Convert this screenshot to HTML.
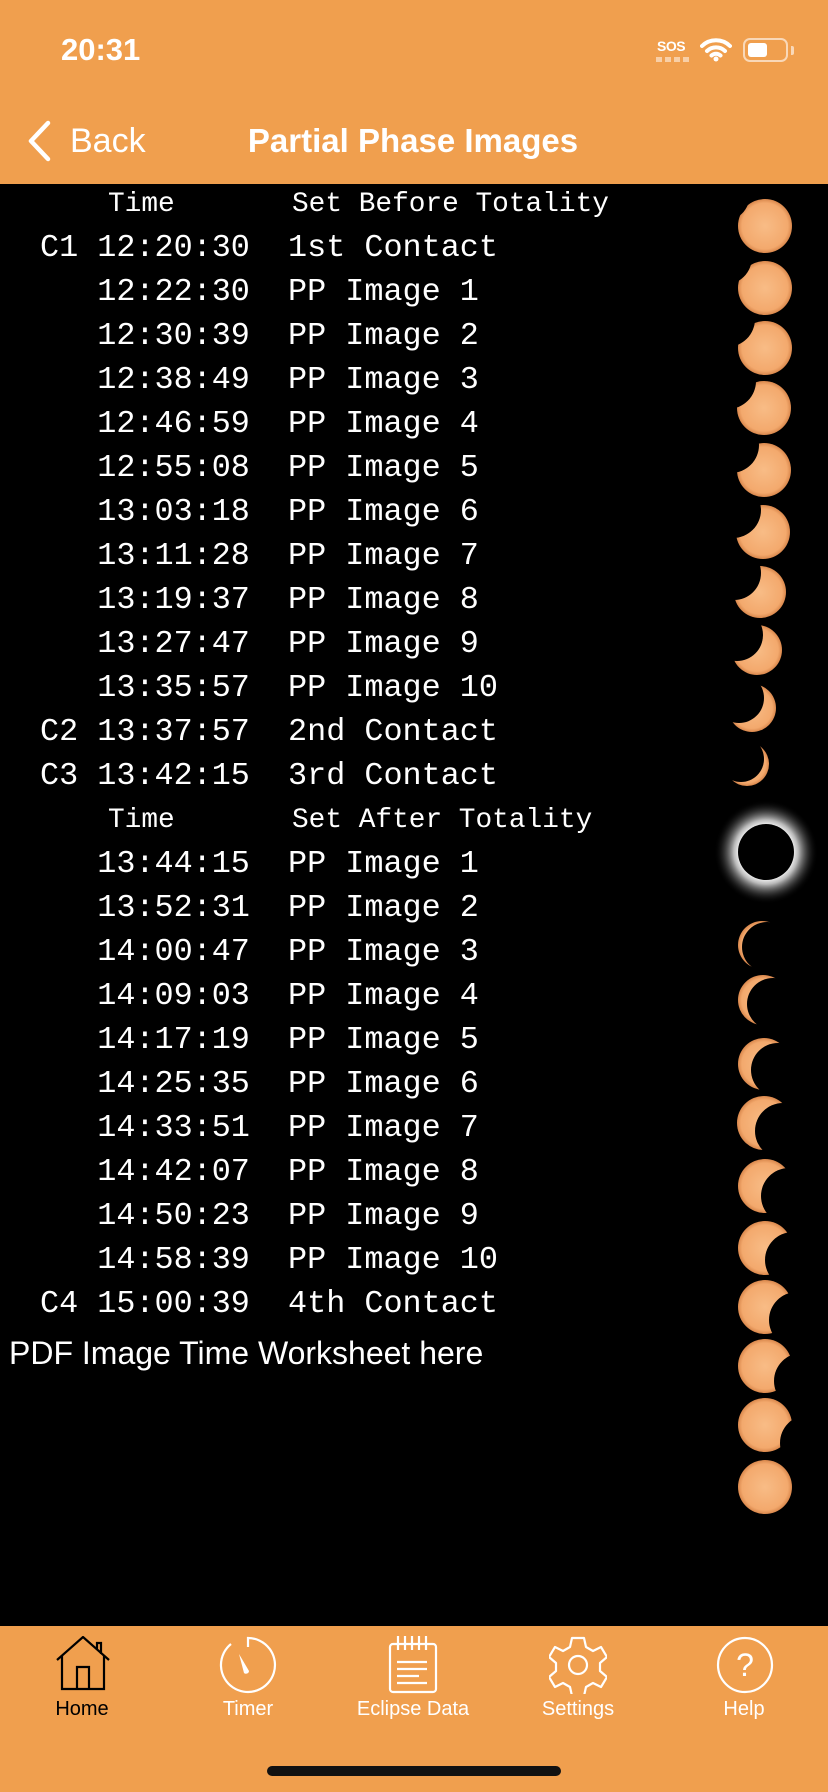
<!DOCTYPE html>
<html><head><meta charset="utf-8"><style>
*{margin:0;padding:0;box-sizing:border-box}
html,body{width:828px;height:1792px;overflow:hidden}
body{background:#000;position:relative;font-family:"Liberation Sans",sans-serif}
.top{position:absolute;left:0;top:0;width:828px;height:184px;background:#F09F4E}
.tab{position:absolute;left:0;top:1626px;width:828px;height:166px;background:#F09F4E}
.m{position:absolute;font-family:"Liberation Mono",monospace;color:#fff;white-space:pre;line-height:1}
.r{font-size:31.8px}
.h{font-size:27.8px}
.lbl{position:absolute;top:72px;font-size:20px;color:#fff;transform:translateX(-50%);white-space:nowrap}
</style></head><body>
<div class="top">
<div style="position:absolute;left:61px;top:32px;font-size:31px;font-weight:bold;color:#fff">20:31</div>
<div style="position:absolute;left:657px;top:38px;font-size:14px;font-weight:bold;color:#fff;letter-spacing:-0.5px">SOS</div>
<div style="position:absolute;left:656px;top:57px;width:33px;height:5px;background:repeating-linear-gradient(90deg,rgba(255,255,255,.5) 0 6px,transparent 6px 9px)"></div>
<svg style="position:absolute;left:700px;top:37px" width="32" height="25" viewBox="0 0 32 25"><path d="M2 9a20 20 0 0 1 28 0M7 14a13 13 0 0 1 18 0M11.5 18.5a6.5 6.5 0 0 1 9 0" stroke="#fff" stroke-width="4" fill="none" stroke-linecap="round"/><circle cx="16" cy="22" r="2.5" fill="#fff"/></svg>
<div style="position:absolute;left:743px;top:38px;width:45px;height:24px;border:2px solid rgba(255,255,255,.6);border-radius:7px"><div style="position:absolute;left:3px;top:3px;width:19px;height:14px;background:#fff;border-radius:3px"></div></div>
<div style="position:absolute;left:791px;top:46px;width:3px;height:9px;background:rgba(255,255,255,.6);border-radius:0 2px 2px 0"></div>
<svg style="position:absolute;left:25px;top:120px" width="28" height="42" viewBox="0 0 28 42"><path d="M23 3L6 21l17 18" stroke="#fff" stroke-width="4.5" fill="none" stroke-linecap="round" stroke-linejoin="round"/></svg>
<div style="position:absolute;left:70px;top:122px;font-size:34px;color:#fff">Back</div>
<div style="position:absolute;left:413px;top:122px;font-size:33px;font-weight:bold;color:#fff;transform:translateX(-50%);white-space:nowrap">Partial Phase Images</div>
</div>

<div class="m h" style="left:108px;top:191px">Time</div>
<div class="m h" style="left:292px;top:191px">Set Before Totality</div>
<div class="m r" style="left:40px;top:233px">C1 12:20:30  1st Contact</div>
<div class="m r" style="left:40px;top:277px">   12:22:30  PP Image 1</div>
<div class="m r" style="left:40px;top:321px">   12:30:39  PP Image 2</div>
<div class="m r" style="left:40px;top:365px">   12:38:49  PP Image 3</div>
<div class="m r" style="left:40px;top:409px">   12:46:59  PP Image 4</div>
<div class="m r" style="left:40px;top:453px">   12:55:08  PP Image 5</div>
<div class="m r" style="left:40px;top:497px">   13:03:18  PP Image 6</div>
<div class="m r" style="left:40px;top:541px">   13:11:28  PP Image 7</div>
<div class="m r" style="left:40px;top:585px">   13:19:37  PP Image 8</div>
<div class="m r" style="left:40px;top:629px">   13:27:47  PP Image 9</div>
<div class="m r" style="left:40px;top:673px">   13:35:57  PP Image 10</div>
<div class="m r" style="left:40px;top:717px">C2 13:37:57  2nd Contact</div>
<div class="m r" style="left:40px;top:761px">C3 13:42:15  3rd Contact</div>
<div class="m h" style="left:108px;top:807px">Time</div>
<div class="m h" style="left:292px;top:807px">Set After Totality</div>
<div class="m r" style="left:40px;top:849px">   13:44:15  PP Image 1</div>
<div class="m r" style="left:40px;top:893px">   13:52:31  PP Image 2</div>
<div class="m r" style="left:40px;top:937px">   14:00:47  PP Image 3</div>
<div class="m r" style="left:40px;top:981px">   14:09:03  PP Image 4</div>
<div class="m r" style="left:40px;top:1025px">   14:17:19  PP Image 5</div>
<div class="m r" style="left:40px;top:1069px">   14:25:35  PP Image 6</div>
<div class="m r" style="left:40px;top:1113px">   14:33:51  PP Image 7</div>
<div class="m r" style="left:40px;top:1157px">   14:42:07  PP Image 8</div>
<div class="m r" style="left:40px;top:1201px">   14:50:23  PP Image 9</div>
<div class="m r" style="left:40px;top:1245px">   14:58:39  PP Image 10</div>
<div class="m r" style="left:40px;top:1289px">C4 15:00:39  4th Contact</div>
<div style="position:absolute;left:9px;top:1335px;font-size:32px;color:#fff;white-space:nowrap">PDF Image Time Worksheet here</div>

<svg style="position:absolute;left:700px;top:184px" width="128" height="1442" viewBox="700 184 128 1442">
<defs>
<radialGradient id="sun" cx="50%" cy="50%" r="50%"><stop offset="0" stop-color="#F8BC86"/><stop offset="0.85" stop-color="#F3A96D"/><stop offset="1" stop-color="#D9874C"/></radialGradient>
<radialGradient id="cor" cx="50%" cy="50%" r="50%"><stop offset="0.5" stop-color="#fff"/><stop offset="0.62" stop-color="#e8e8e8" stop-opacity=".8"/><stop offset="1" stop-color="#000" stop-opacity="0"/></radialGradient>
<mask id="a1"><rect x="700" y="184" width="128" height="1442" fill="#fff"/><circle cx="722" cy="194" r="28" fill="#000"/></mask>
<mask id="a2"><rect x="700" y="184" width="128" height="1442" fill="#fff"/><circle cx="724" cy="257" r="28" fill="#000"/></mask>
<mask id="a3"><rect x="700" y="184" width="128" height="1442" fill="#fff"/><circle cx="727" cy="319" r="28" fill="#000"/></mask>
<mask id="a4"><rect x="700" y="184" width="128" height="1442" fill="#fff"/><circle cx="728" cy="381" r="28" fill="#000"/></mask>
<mask id="a5"><rect x="700" y="184" width="128" height="1442" fill="#fff"/><circle cx="731" cy="445" r="28" fill="#000"/></mask>
<mask id="a6"><rect x="700" y="184" width="128" height="1442" fill="#fff"/><circle cx="733" cy="510" r="28" fill="#000"/></mask>
<mask id="a7"><rect x="700" y="184" width="128" height="1442" fill="#fff"/><circle cx="734" cy="573" r="27" fill="#000"/></mask>
<mask id="a8"><rect x="700" y="184" width="128" height="1442" fill="#fff"/><circle cx="737" cy="635" r="26" fill="#000"/></mask>
<mask id="a9"><rect x="700" y="184" width="128" height="1442" fill="#fff"/><circle cx="739" cy="698" r="25" fill="#000"/></mask>
<mask id="a10"><rect x="700" y="184" width="128" height="1442" fill="#fff"/><circle cx="741" cy="759" r="23" fill="#000"/></mask>
<mask id="b1"><rect x="700" y="184" width="128" height="1442" fill="#fff"/><circle cx="767" cy="947" r="25" fill="#000"/></mask>
<mask id="b2"><rect x="700" y="184" width="128" height="1442" fill="#fff"/><circle cx="773" cy="1004" r="26" fill="#000"/></mask>
<mask id="b3"><rect x="700" y="184" width="128" height="1442" fill="#fff"/><circle cx="778" cy="1070" r="27" fill="#000"/></mask>
<mask id="b4"><rect x="700" y="184" width="128" height="1442" fill="#fff"/><circle cx="783" cy="1131" r="28" fill="#000"/></mask>
<mask id="b5"><rect x="700" y="184" width="128" height="1442" fill="#fff"/><circle cx="789" cy="1196" r="28" fill="#000"/></mask>
<mask id="b6"><rect x="700" y="184" width="128" height="1442" fill="#fff"/><circle cx="793" cy="1260" r="28" fill="#000"/></mask>
<mask id="b7"><rect x="700" y="184" width="128" height="1442" fill="#fff"/><circle cx="797" cy="1320" r="28" fill="#000"/></mask>
<mask id="b8"><rect x="700" y="184" width="128" height="1442" fill="#fff"/><circle cx="802" cy="1381" r="28" fill="#000"/></mask>
<mask id="b9"><rect x="700" y="184" width="128" height="1442" fill="#fff"/><circle cx="808" cy="1443" r="28" fill="#000"/></mask>
</defs>
<g fill="url(#sun)">
<circle cx="765" cy="226" r="27" mask="url(#a1)"/>
<circle cx="765" cy="288" r="27" mask="url(#a2)"/>
<circle cx="765" cy="348" r="27" mask="url(#a3)"/>
<circle cx="764" cy="408" r="27" mask="url(#a4)"/>
<circle cx="764" cy="470" r="27" mask="url(#a5)"/>
<circle cx="763" cy="532" r="27" mask="url(#a6)"/>
<circle cx="760" cy="592" r="26" mask="url(#a7)"/>
<circle cx="757" cy="650" r="25" mask="url(#a8)"/>
<circle cx="752" cy="708" r="24" mask="url(#a9)"/>
<circle cx="747" cy="764" r="22" mask="url(#a10)"/>
<circle cx="762" cy="945" r="24" mask="url(#b1)"/>
<circle cx="763" cy="1000" r="25" mask="url(#b2)"/>
<circle cx="764" cy="1064" r="26" mask="url(#b3)"/>
<circle cx="764" cy="1123" r="27" mask="url(#b4)"/>
<circle cx="765" cy="1186" r="27" mask="url(#b5)"/>
<circle cx="765" cy="1248" r="27" mask="url(#b6)"/>
<circle cx="765" cy="1307" r="27" mask="url(#b7)"/>
<circle cx="765" cy="1366" r="27" mask="url(#b8)"/>
<circle cx="765" cy="1425" r="27" mask="url(#b9)"/>
<circle cx="765" cy="1487" r="27"/>
</g>
<circle cx="766" cy="852" r="52" fill="url(#cor)"/>
<circle cx="766" cy="852" r="28" fill="#000"/>
</svg>

<div class="tab">
<svg style="position:absolute;left:55px;top:10px" width="56" height="56" viewBox="0 0 56 56"><path d="M2 24L28 1l26 23M7 20v33h42V20M42 14V7h4v11M22 53V31h12v22" stroke="#000" stroke-width="2.2" fill="none"/></svg>
<svg style="position:absolute;left:219px;top:10px" width="58" height="58" viewBox="0 0 58 58"><path d="M29 11V2A27 27 0 1 1 12 8" stroke="#fff" stroke-width="2.2" fill="none"/><path d="M20 18l10 17a3 3 0 0 1-5 2z" fill="#fff"/></svg>
<svg style="position:absolute;left:388px;top:8px" width="50" height="60" viewBox="0 0 50 60"><rect x="2" y="10" width="46" height="48" rx="3" stroke="#fff" stroke-width="2.2" fill="none"/><path d="M10 2v14M17 2v14M24 2v14M31 2v14M38 2v14M9 28h30M9 35h30M9 42h22M9 49h30" stroke="#fff" stroke-width="2.2"/></svg>
<svg style="position:absolute;left:549px;top:10px" width="58" height="58" viewBox="0 0 58 58"><path d="M23 2h12l2 9 7 4 8-4 6 10-7 6v8l7 6-6 10-8-4-7 4-2 9H23l-2-9-7-4-8 4-6-10 7-6v-8l-7-6 6-10 8 4 7-4z" stroke="#fff" stroke-width="2.2" fill="none" stroke-linejoin="round"/><circle cx="29" cy="29" r="9" stroke="#fff" stroke-width="2.2" fill="none"/></svg>
<svg style="position:absolute;left:716px;top:10px" width="58" height="58" viewBox="0 0 58 58"><ellipse cx="29" cy="29" rx="27" ry="27" stroke="#fff" stroke-width="2.2" fill="none"/><text x="29" y="40" text-anchor="middle" font-size="32" font-family="Liberation Sans" fill="#fff">?</text></svg>
<div class="lbl" style="left:82px;color:#000">Home</div>
<div class="lbl" style="left:248px">Timer</div>
<div class="lbl" style="left:413px">Eclipse Data</div>
<div class="lbl" style="left:578px">Settings</div>
<div class="lbl" style="left:744px">Help</div>
<div style="position:absolute;left:267px;top:140px;width:294px;height:10px;border-radius:5px;background:#111"></div>
</div>
</body></html>
